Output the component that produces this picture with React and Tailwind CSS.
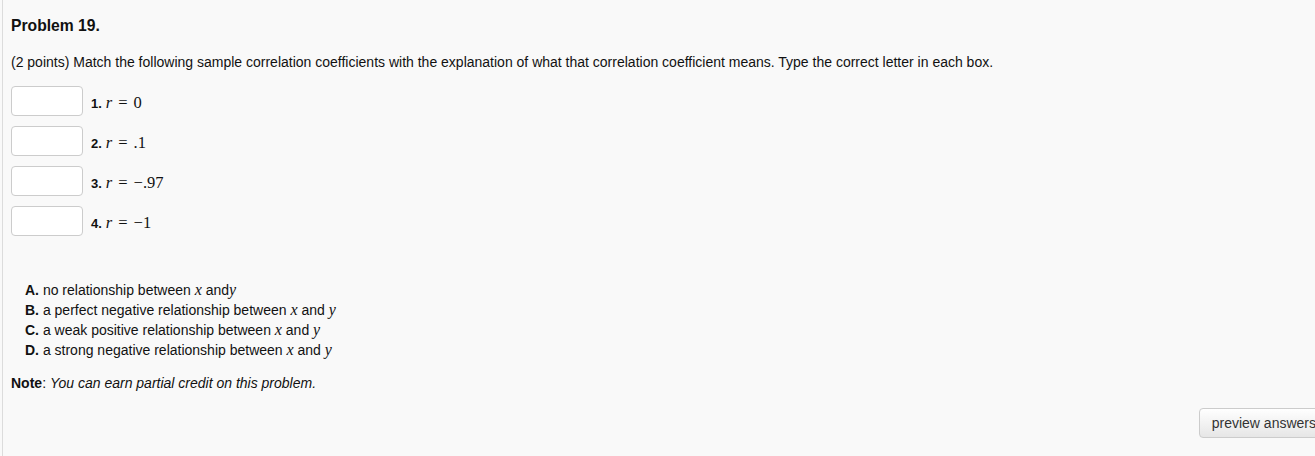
import React from "react";

const M = ({ children }) => (
  <span className="font-['Liberation_Serif',serif] text-[16.5px]">{children}</span>
);
const V = ({ children, size = "text-[16.5px]" }) => (
  <span className={`font-['Liberation_Serif',serif] italic ${size}`}>{children}</span>
);

const rows = [
  { n: "1.", val: "0" },
  { n: "2.", val: ".1" },
  { n: "3.", val: "\u2212.97" },
  { n: "4.", val: "\u22121" },
];

const answers = [
  { k: "A.", text: "no relationship between ", tight: true },
  { k: "B.", text: "a perfect negative relationship between " },
  { k: "C.", text: "a weak positive relationship between " },
  { k: "D.", text: "a strong negative relationship between " },
];

export default function App() {
  return (
    <div className="w-[1315px] h-[456px] bg-[#f9f9f9] font-['Liberation_Sans',Arial,sans-serif] text-[#111] overflow-hidden">
      <div className="ml-[2px] h-full border-l border-[#dcdcdc] pl-[8px] flex flex-col">
        <h2 className="mt-[16px] text-[15.7px] font-bold leading-[20px]">Problem 19.</h2>
        <p className="mt-[18px] text-[14px] leading-[16px]">
          (2 points) Match the following sample correlation coefficients with the explanation of what that correlation coefficient means. Type the correct letter in each box.
        </p>
        <div className="mt-[16px] flex flex-col gap-[10px]">
          {rows.map((r) => (
            <div key={r.n} className="flex items-center">
              <div className="w-[72px] h-[30px] bg-white border border-[#cccccc] rounded-[4px]" />
              <div className="ml-[8px] pt-[4px] flex items-baseline">
                <span className="text-[13px] font-bold">{r.n}</span>
                <span className="ml-[4px]">
                  <V>r</V>
                  <M>
                    <span className="mx-[6px]">=</span>
                    {r.val}
                  </M>
                </span>
              </div>
            </div>
          ))}
        </div>
        <div className="mt-[44px] ml-[14px] flex flex-col text-[14px] leading-[20px]">
          {answers.map((a) => (
            <div key={a.k}>
              <b>{a.k}</b> {a.text}
              <V size="text-[16px]">x</V> and{a.tight ? "" : " "}
              <V size="text-[16px]">y</V>
            </div>
          ))}
        </div>
        <p className="mt-[15px] text-[14px] leading-[16px]">
          <b>Note</b>: <i>You can earn partial credit on this problem.</i>
        </p>
        <div className="mt-[17px] flex justify-end">
          <button className="-mr-[14px] h-[30px] px-[12px] text-[14px] text-[#333] border border-[#cccccc] rounded-[4px] bg-gradient-to-b from-white to-[#e6e6e6]">
            preview answers
          </button>
        </div>
      </div>
    </div>
  );
}
